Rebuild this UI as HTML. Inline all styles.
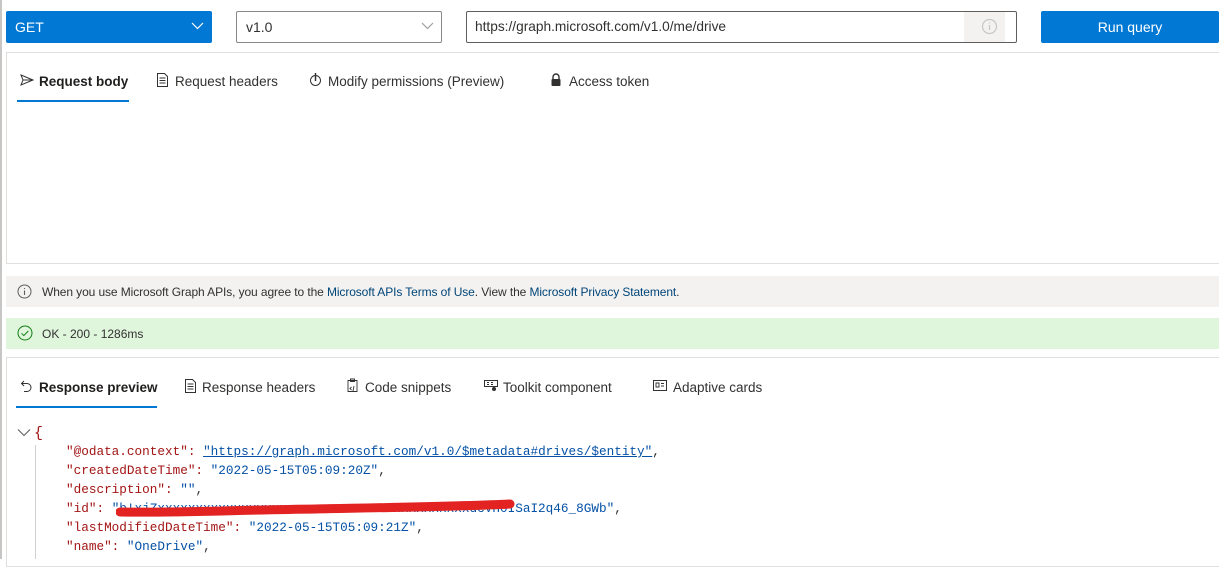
<!DOCTYPE html>
<html><head><style>
*{margin:0;padding:0;box-sizing:border-box}
body{width:1219px;height:559px;overflow:hidden;background:#fff;font-family:"Liberation Sans",sans-serif;color:#323130;position:relative;font-size:14px}
.a{position:absolute}
.tab{position:absolute;font-size:13.5px;color:#323130;white-space:nowrap}
.code{position:absolute;left:66px;font-family:"Liberation Mono",monospace;font-size:12.7px;white-space:pre;color:#a31515}
.v{color:#0451a5}
</style></head><body>
<div class="a" style="left:0;top:0;width:2px;height:559px;background:#c8c6c4"></div>
<div class="a" style="left:6px;top:11px;width:206px;height:32px;background:#0078d4;border-radius:2px;color:#fff;padding:8px 9px;font-size:14px">GET</div>
<svg class="a" style="left:191px;top:22px" width="13" height="8"><path d="M1 1l5.5 5.5L12 1" stroke="#fff" fill="none" stroke-width="1.2"/></svg>
<div class="a" style="left:236px;top:11px;width:206px;height:32px;border:1px solid #8a8886;border-radius:2px;padding:7px 9px">v1.0</div>
<svg class="a" style="left:421px;top:22px" width="13" height="8"><path d="M1 1l5.5 5.5L12 1" stroke="#a19f9d" fill="none" stroke-width="1.2"/></svg>
<div class="a" style="left:466px;top:11px;width:551px;height:32px;border:1px solid #605e5c;border-radius:2px;padding:7px 8px;font-size:13.7px">https://graph.microsoft.com/v1.0/me/drive</div>
<div class="a" style="left:964px;top:12px;width:41px;height:30px;background:#f3f2f1"></div>
<svg class="a" style="left:981px;top:18px" width="17" height="17"><circle cx="8.5" cy="8.5" r="7" stroke="#c8c6c4" fill="none" stroke-width="1.2"/><path d="M8.5 7v5M8.5 4.5v1" stroke="#c8c6c4" stroke-width="1.3"/></svg>
<div class="a" style="left:1041px;top:11px;width:178px;height:32px;background:#0078d4;border-radius:2px;color:#fff;text-align:center;padding-top:8px">Run query</div>
<div class="a" style="left:6px;top:52px;width:1213px;height:212px;border:1px solid #e1dfdd;border-right:none"></div>
<svg class="a" style="left:20px;top:74px" width="14" height="12"><path d="M1 1l12 5-12 5 2-5z M3 6h10" stroke="#323130" fill="none" stroke-width="1"/></svg>
<div class="tab" style="left:39px;top:74px;font-weight:bold;color:#201f1e">Request body</div>
<div class="a" style="left:17px;top:100px;width:112px;height:2px;background:#0078d4"></div>
<svg class="a" style="left:156px;top:73px" width="13" height="14"><path d="M1.5 .5h7l3 3v10h-10z M3.5 5h6M3.5 7.5h6M3.5 10h6" stroke="#323130" fill="none" stroke-width="1"/></svg>
<div class="tab" style="left:175px;top:74px">Request headers</div>
<svg class="a" style="left:309px;top:72px" width="13" height="15"><circle cx="6.5" cy="8.5" r="5" stroke="#323130" fill="none"/><path d="M6.5 1v8" stroke="#323130" stroke-width="1.5"/></svg>
<div class="tab" style="left:328px;top:74px">Modify permissions (Preview)</div>
<svg class="a" style="left:550px;top:73px" width="12" height="14"><path d="M3 6V4a3 3 0 0 1 6 0v2" stroke="#323130" fill="none" stroke-width="1.4"/><rect x="1.5" y="6" width="9" height="7" rx="1" fill="#323130"/></svg>
<div class="tab" style="left:569px;top:74px">Access token</div>
<div class="a" style="left:6px;top:276px;width:1213px;height:31px;background:#f3f2f1"></div>
<svg class="a" style="left:17px;top:284px" width="15" height="15"><circle cx="7.5" cy="7.5" r="6.5" stroke="#605e5c" fill="none"/><path d="M7.5 6.5v4.5M7.5 4v1" stroke="#605e5c" stroke-width="1.1"/></svg>
<div class="a" style="left:42px;top:285px;font-size:12px;color:#323130;letter-spacing:-0.1px">When you use Microsoft Graph APIs, you agree to the <span style="color:#004578">Microsoft APIs Terms of Use</span>. View the <span style="color:#004578">Microsoft Privacy Statement</span>.</div>
<div class="a" style="left:6px;top:318px;width:1213px;height:31px;background:#dff6dd"></div>
<svg class="a" style="left:17px;top:325px" width="16" height="16"><circle cx="8" cy="8" r="7" stroke="#107c10" fill="none"/><path d="M4.5 8.3l2.3 2.3 4.5-4.6" stroke="#107c10" fill="none"/></svg>
<div class="a" style="left:42px;top:327px;font-size:12px;color:#323130">OK - 200 - 1286ms</div>
<div class="a" style="left:6px;top:357px;width:1213px;height:210px;border:1px solid #e1dfdd;border-right:none"></div>
<svg class="a" style="left:20px;top:380px" width="12" height="13"><path d="M4 1L1.5 3.5 4 6 M1.5 3.5H7a4 4 0 0 1 0 8H4" stroke="#323130" fill="none"/></svg>
<div class="tab" style="left:39px;top:380px;font-weight:bold;color:#201f1e">Response preview</div>
<div class="a" style="left:16px;top:406px;width:141px;height:2px;background:#0078d4"></div>
<svg class="a" style="left:184px;top:379px" width="13" height="14"><path d="M1.5 .5h7l3 3v10h-10z M3.5 5h6M3.5 7.5h6M3.5 10h6" stroke="#323130" fill="none" stroke-width="1"/></svg>
<div class="tab" style="left:202px;top:380px">Response headers</div>
<svg class="a" style="left:346px;top:378px" width="13" height="15"><path d="M2 2.5h9v11H2z M4.5 1h4v2.5h-4z M5.5 9l-1.5 1.5 1.5 1.5M8 8l-1 5" stroke="#323130" fill="none" stroke-width=".9"/></svg>
<div class="tab" style="left:365px;top:380px">Code snippets</div>
<svg class="a" style="left:484px;top:380px" width="14" height="12"><rect x=".5" y=".5" width="13" height="6" stroke="#323130" fill="none"/><path d="M3 2.5h2M7 2.5h2M3 4.5h2M7 4.5h2" stroke="#323130"/><circle cx="10" cy="9" r="2" fill="#323130"/></svg>
<div class="tab" style="left:503px;top:380px">Toolkit component</div>
<svg class="a" style="left:653px;top:380px" width="14" height="11"><rect x=".5" y=".5" width="13" height="10" stroke="#323130" fill="none"/><path d="M3 3h3v4H3zM8 3.5h3M8 6h3" stroke="#323130" fill="none" stroke-width=".9"/></svg>
<div class="tab" style="left:673px;top:380px">Adaptive cards</div>
<svg class="a" style="left:17px;top:428px" width="14" height="9"><path d="M1 1.5l6 6 6-6" stroke="#605e5c" fill="none" stroke-width="1.1"/></svg>
<div class="a" style="left:34px;top:425px;font-family:'Liberation Mono',monospace;font-size:15px;color:#a31515">{</div>
<div class="a" style="left:35px;top:445px;width:1px;height:114px;background:#d2d0ce"></div>
<div class="code" style="top:444px">"@odata.context": <span class="v" style="text-decoration:underline">"https://graph.microsoft.com/v1.0/$metadata#drives/$entity"</span><span style="color:#323130">,</span></div>
<div class="code" style="top:463px">"createdDateTime": <span class="v">"2022-05-15T05:09:20Z"</span><span style="color:#323130">,</span></div>
<div class="code" style="top:482px">"description": <span class="v">""</span><span style="color:#323130">,</span></div>
<div class="code" style="top:501px">"id": <span class="v">"b!xjZxxxxxxxxxxxxxxxxxxxxxxxxxxxxxxxxxxxxxxxxxdcVH0ISaI2q46_8GWb"</span><span style="color:#323130">,</span></div>
<svg class="a" style="left:116px;top:498px" width="400" height="24"><path d="M4 14C60 15 120 12 200 11 300 9 360 8 394 6" stroke="#e32222" stroke-width="9" fill="none" stroke-linecap="round"/></svg>
<div class="code" style="top:520px">"lastModifiedDateTime": <span class="v">"2022-05-15T05:09:21Z"</span><span style="color:#323130">,</span></div>
<div class="code" style="top:539px">"name": <span class="v">"OneDrive"</span><span style="color:#323130">,</span></div>
</body></html>
